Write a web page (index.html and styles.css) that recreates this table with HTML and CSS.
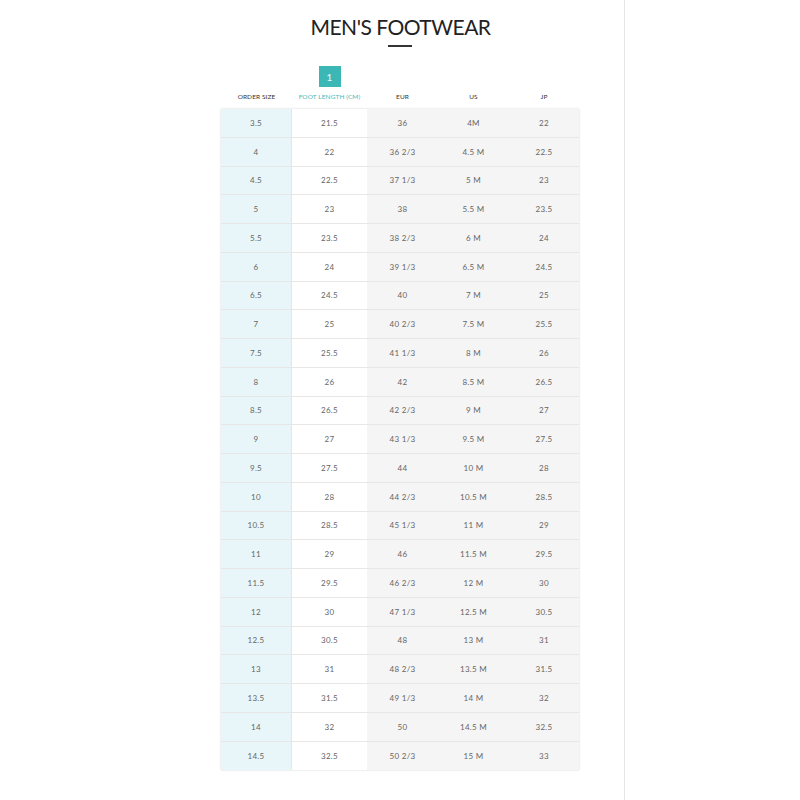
FILE: index.html
```html
<!DOCTYPE html>
<html>
<head>
<meta charset="utf-8">
<link rel="stylesheet" href="styles.css">
</head>
<body>
<div class="panel">
  <div class="content">
    <h1 class="title">MEN'S FOOTWEAR</h1>
    <div class="rule"></div>
    <div class="head">
      <div class="hcell">ORDER SIZE</div>
      <div class="hcell active"><span class="badge">1</span>FOOT LENGTH (CM)</div>
      <div class="hcell">EUR</div>
      <div class="hcell">US</div>
      <div class="hcell">JP</div>
    </div>
    <div class="table" id="table"></div>
  </div>
</div>
<script>
var rows=[["3.5","21.5","36","4M","22"],["4","22","36 2/3","4.5 M","22.5"],["4.5","22.5","37 1/3","5 M","23"],["5","23","38","5.5 M","23.5"],["5.5","23.5","38 2/3","6 M","24"],["6","24","39 1/3","6.5 M","24.5"],["6.5","24.5","40","7 M","25"],["7","25","40 2/3","7.5 M","25.5"],["7.5","25.5","41 1/3","8 M","26"],["8","26","42","8.5 M","26.5"],["8.5","26.5","42 2/3","9 M","27"],["9","27","43 1/3","9.5 M","27.5"],["9.5","27.5","44","10 M","28"],["10","28","44 2/3","10.5 M","28.5"],["10.5","28.5","45 1/3","11 M","29"],["11","29","46","11.5 M","29.5"],["11.5","29.5","46 2/3","12 M","30"],["12","30","47 1/3","12.5 M","30.5"],["12.5","30.5","48","13 M","31"],["13","31","48 2/3","13.5 M","31.5"],["13.5","31.5","49 1/3","14 M","32"],["14","32","50","14.5 M","32.5"],["14.5","32.5","50 2/3","15 M","33"]];
var t=document.getElementById('table');
rows.forEach(function(r){
  var row=document.createElement('div');row.className='row';
  r.forEach(function(v,i){var c=document.createElement('div');c.className='cell c'+i;c.textContent=v;row.appendChild(c);});
  t.appendChild(row);
});
</script>
</body>
</html>
```
FILE: styles.css
```css
html, body { margin: 0; padding: 0; background: #fff; }
body { width: 800px; height: 800px; overflow: hidden; font-family: "Lato", "Noto Sans", sans-serif; }
.panel { width: 624px; height: 800px; border-right: 1px solid #e6e6e6; }
.content { margin-left: 221px; width: 358px; padding-top: 13px; display: flex; flex-direction: column; }
.title { margin: 0; text-align: center; font-weight: 400; font-size: 21px; line-height: 28px; color: #222; letter-spacing: -0.5px; padding-left: 1px; }
.rule { width: 24px; height: 2px; background: #333; margin: 4px auto 0; }
.head { display: grid; grid-template-columns: 71px 75px 71px 71px 70px; margin-top: 17px; height: 45px; }
.hcell { display: flex; flex-direction: column; justify-content: flex-end; align-items: center; font-size: 6.5px; color: #333; padding-bottom: 9px; letter-spacing: 0.1px; white-space: nowrap; }
.hcell.active { color: #3fb8b8; }
.badge { width: 22px; height: 21px; background: #3bb8b6; color: #e8fafa; font-size: 10px; display: flex; align-items: center; justify-content: center; margin-bottom: 6px; }
.table { box-shadow: 0 0 2px rgba(0,0,0,0.18); }
.row { display: grid; grid-template-columns: 71px 75px 71px 71px 70px; height: 28.75px; box-sizing: border-box; border-bottom: 1px solid #e7e7e7; }
.row:last-child { border-bottom: none; }
.cell { display: flex; align-items: center; justify-content: center; font-size: 8px; color: #666; letter-spacing: 0.3px; }
.c0 { background: #e9f6f9; border-right: 1px solid #d6ecf0; }
.c1 { background: #fff; }
.c2, .c3, .c4 { background: #f5f5f5; }
```
